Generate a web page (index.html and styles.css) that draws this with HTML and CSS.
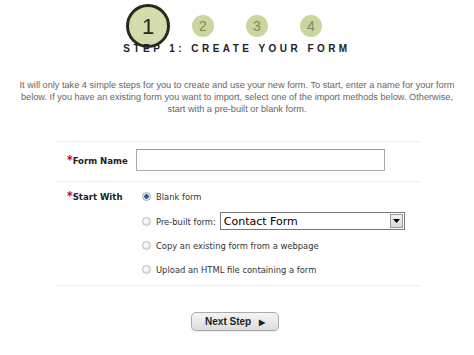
FILE: index.html
```html
<!DOCTYPE html>
<html>
<head>
<meta charset="utf-8">
<link rel="stylesheet" href="styles.css">
</head>
<body>
<div class="page">
  <div class="steps">
    <div class="step current">1</div>
    <div class="step">2</div>
    <div class="step">3</div>
    <div class="step">4</div>
  </div>
  <h1 class="title">STEP 1: CREATE YOUR FORM</h1>
  <p class="intro">It will only take 4 simple steps for you to create and use your new form. To start, enter a name for your form below. If you have an existing form you want to import, select one of the import methods below. Otherwise, start with a pre-built or blank form.</p>
  <div class="form">
    <div class="row">
      <div class="label"><span class="req">*</span>Form Name</div>
      <div class="field"><input class="text" type="text"></div>
    </div>
    <div class="row">
      <div class="label"><span class="req">*</span>Start With</div>
      <div class="field options">
        <label class="opt"><span class="radio checked"></span>Blank form</label>
        <label class="opt"><span class="radio"></span>Pre-built form:
          <span class="select"><span class="sel-text">Contact Form</span><span class="sel-btn"><svg width="7" height="4" viewBox="0 0 7 4"><path d="M0 0h7L3.5 4z" fill="#000"/></svg></span></span>
        </label>
        <label class="opt"><span class="radio"></span>Copy an existing form from a webpage</label>
        <label class="opt"><span class="radio"></span>Upload an HTML file containing a form</label>
      </div>
    </div>
  </div>
  <div class="actions">
    <button class="next">Next Step <span class="arrow">&#9654;</span></button>
  </div>
</div>
</body>
</html>
```
FILE: styles.css
```css
html, body { margin: 0; padding: 0; background: #fff; }
.page { width: 474px; height: 355px; overflow: hidden; font-family: "Liberation Sans", Arial, sans-serif; }
.steps { display: flex; align-items: center; gap: 32px; padding: 5px 0 0 126px; height: 42px; }
.step { width: 22px; height: 22px; border-radius: 50%; background: #cbd59f; color: #7d8b57; font: 14px "Liberation Sans", Arial, sans-serif; display: flex; align-items: center; justify-content: center; }
.step.current { width: 38px; height: 38px; border: 3px solid #262a22; background: #d3dcaa; color: #262a22; font-size: 22px; line-height: 38px; padding-top: 2px; box-sizing: content-box; height: 36px; margin-right: -10px; }
.title { margin: -5px 0 0; text-align: center; font: bold 10px "Liberation Sans", Arial, sans-serif; letter-spacing: 3.45px; color: #222; padding-top: 1px; height: 36px; }
.intro { margin: 0 auto; width: 440px; text-align: center; font-size: 9.2px; line-height: 12px; color: #666; height: 62px; }
.form { margin: 0 54px 0 57px; border-bottom: 1px solid #eee; }
.row { display: flex; border-top: 1px solid #eee; }
.row:first-child { padding: 7px 0 9px; }
.row:nth-child(2) { padding: 7px 0 4px; }
.label { width: 69px; padding-left: 10px; font: bold 9.5px "DejaVu Sans Condensed", "DejaVu Sans", sans-serif; color: #222; line-height: 22px; }
.row:nth-child(2) .label { line-height: 14px; }
.req { color: #c00; font-size: 12px; }
.text { width: 249px; height: 22px; box-sizing: border-box; border: 1px solid #aaa; border-top-color: #999; margin: 0; padding: 0; background: #fff; }
.options { display: flex; flex-direction: column; padding-left: 6px; }
.opt { display: flex; align-items: center; height: 24px; font: 9.3px "DejaVu Sans Condensed", "DejaVu Sans", sans-serif; color: #333; }
.opt:first-child { height: 14px; margin-bottom: 6px; }
.radio { width: 9px; height: 9px; border-radius: 50%; border: 1px solid #bbb; background: radial-gradient(circle at 40% 35%, #fff, #ddd); margin-right: 5px; box-sizing: border-box; }
.radio.checked { background: radial-gradient(circle, #2d5f84 0 2px, #e9eef2 2.5px); border-color: #9ab; }
.select { display: inline-flex; align-items: center; width: 185px; height: 18px; box-sizing: border-box; border: 1px solid #777; margin-left: 4px; background: #fff; }
.sel-text { flex: 1; font: 11px "DejaVu Sans", sans-serif; color: #000; padding-left: 3px; }
.sel-btn { width: 13px; height: 14px; margin-right: 1px; box-sizing: border-box; border: 1px solid #999; background: linear-gradient(#f4f4f4, #d8d8d8); display: flex; align-items: center; justify-content: center; }
.actions { display: flex; justify-content: center; padding-top: 26px; padding-right: 4px; }
.next { width: 88px; height: 19px; border: 1px solid #aaa; border-radius: 5px; background: linear-gradient(#f5f5f5, #dcdcdc); font: bold 10px "Liberation Sans", Arial, sans-serif; color: #222; padding: 0; box-shadow: 0 1px 1px rgba(0,0,0,0.1); }
.arrow { font-size: 8px; margin-left: 5px; }
```
